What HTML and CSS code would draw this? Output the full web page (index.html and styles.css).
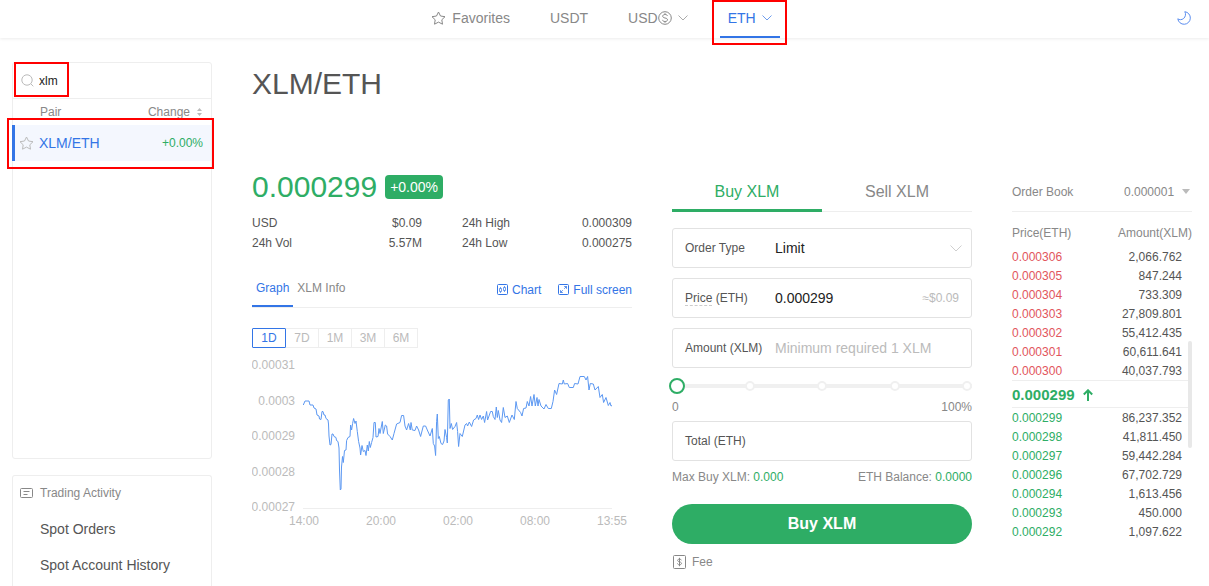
FILE: index.html
```html
<!DOCTYPE html>
<html lang="en">

<head>
    <meta charset="UTF-8">
    <meta name="viewport" content="width=device-width, initial-scale=1.0">
    <title>XLM/ETH</title>
    <link rel="stylesheet" href="styles.css">
</head>

<body>

    <header class="topbar">
        <nav class="markets">
            <a href="#" class="market">
                <svg class="star" width="15" height="14" viewBox="0 0 15 14"><path d="M7.5 1l2 4 4.5.7-3.2 3.1.7 4.4-4-2.1-4 2.1.7-4.4L1 5.7 5.500 5z"/></svg>
                Favorites
            </a>
            <a href="#" class="market">USDT</a>
            <a href="#" class="market">
                <span class="usds">USD<svg width="14" height="14" viewBox="0 0 14 14"><circle cx="7" cy="7" r="6.300"/><path d="M9.500 5C9.200 3.900 8.200 3.500 7 3.500S4.700 4.100 4.700 5.200 5.700 6.700 7 7s2.500.6 2.500 1.800S8.300 10.500 7 10.500 4.700 10 4.500 8.900M7 2.200v1.300M7 10.500v1.300"/></svg></span>
                <svg class="chevron" width="10" height="6" viewBox="0 0 10 6"><path d="M.5.5L5 5 9.500.5"/></svg>
            </a>
            <a href="#" class="market active">
                ETH
                <svg class="chevron" width="10" height="6" viewBox="0 0 10 6"><path d="M.5.5L5 5 9.500.5"/></svg>
                <span class="mark mark-market"></span>
            </a>
        </nav>
        <button class="theme" aria-label="Dark mode">
            <svg width="14" height="14" viewBox="0 0 14 14"><path d="M7.800.7A6.300 6.300 0 1 1 .8 7.800C2.300 9 4.800 9 6.600 7.500 8.600 5.800 9.100 2.800 7.800.7z"/></svg>
        </button>
    </header>

    <div class="layout">

        <aside class="sidebar">
            <section class="card pairs">
                <div class="search">
                    <svg width="13" height="13" viewBox="0 0 13 13"><circle cx="6" cy="6" r="5.200"/><path d="M9.800 9.800l2.500 2.500"/></svg>
                    <input type="text" value="xlm" aria-label="Search pair">
                    <span class="mark mark-search"></span>
                </div>
                <div class="pairs-head">
                    <span>Pair</span>
                    <button>Change <svg width="5" height="8" viewBox="0 0 5 8"><path d="M2.500 0L5 3H0zM2.500 8L5 5H0z"/></svg></button>
                </div>
                <a href="#" class="pair">
                    <svg class="star" width="15" height="14" viewBox="0 0 15 14"><path d="M7.5 1l2 4 4.5.7-3.2 3.1.7 4.4-4-2.1-4 2.1.7-4.4L1 5.7 5.500 5z"/></svg>
                    <span class="pair-name">XLM/ETH</span>
                    <span class="pair-change">+0.00%</span>
                    <span class="mark mark-pair"></span>
                </a>
            </section>

            <section class="card activity">
                <h2>
                    <svg width="14" height="10" viewBox="0 0 14 10"><rect x=".5" y=".5" width="12" height="9" rx="1"/><path d="M3.500 3.500h6M3.500 6.500h4"/></svg>
                    Trading Activity
                </h2>
                <a href="#">Spot Orders</a>
                <a href="#">Spot Account History</a>
            </section>
        </aside>

        <main class="trade">
            <h1>XLM/ETH</h1>

            <div class="columns">

                <section class="overview">
                    <div class="price">
                        <span class="price-value">0.000299</span>
                        <span class="badge">+0.00%</span>
                    </div>
                    <dl class="stats">
                        <div><dt>USD</dt><dd>$0.09</dd></div>
                        <div><dt>24h High</dt><dd>0.000309</dd></div>
                        <div><dt>24h Vol</dt><dd>5.57M</dd></div>
                        <div><dt>24h Low</dt><dd>0.000275</dd></div>
                    </dl>

                    <div class="chart-bar">
                        <button class="chart-tab active">Graph</button>
                        <button class="chart-tab">XLM Info</button>
                        <div class="chart-links">
                            <a href="#">
                                <svg width="11" height="11" viewBox="0 0 11 11"><rect x=".5" y=".5" width="10" height="10" rx="1"/><path stroke-width=".7" d="M2.500 4.500h2v3h-2zM3.500 3v1.500M3.500 7.500V9M6.500 3.500h2v3h-2zM7.500 2v1.500M7.500 6.500V8"/></svg>
                                Chart
                            </a>
                            <a href="#">
                                <svg width="11" height="11" viewBox="0 0 11 11"><rect x=".5" y=".5" width="10" height="10" rx="1"/><path stroke-width=".8" d="M6.200 4.800l2.300-2.300M6.200 2.500h2.300v2.300M4.800 6.200L2.500 8.500M2.500 6.200v2.300h2.300"/></svg>
                                Full screen
                            </a>
                        </div>
                    </div>

                    <div class="ranges">
                        <button class="active">1D</button>
                        <button>7D</button>
                        <button>1M</button>
                        <button>3M</button>
                        <button>6M</button>
                    </div>

                    <svg class="chart" viewBox="0 0 380 175" role="img" aria-label="XLM/ETH price, last day">
                        <g class="axis-y">
                            <text x="43" y="14">0.00031</text>
                            <text x="43" y="50">0.0003</text>
                            <text x="43" y="85">0.00029</text>
                            <text x="43" y="121">0.00028</text>
                            <text x="43" y="156">0.00027</text>
                        </g>
                        <g class="axis-x">
                            <text x="52" y="170">14:00</text>
                            <text x="129" y="170">20:00</text>
                            <text x="206" y="170">02:00</text>
                            <text x="283" y="170">08:00</text>
                            <text x="360" y="170">13:55</text>
                        </g>
                        <path class="baseline" d="M51 153.500h309"/>
                        <polyline class="line" points="51.3,50 53,46 57,46 58,50 61,50 62,53 64,54 65,60 67,61 67.5,64 69,64.5 70,56.5 71,56.5 72,60 73,60 74,63.5 76,65 76.5,69 77,81 78,90 79,89.5 80,79 81,79 82,81.5 84,82.5 84.5,85.5 86,86.5 87,93 87.5,115 88.3,135 89,134 89.5,112 90.5,101.5 91.3,107.5 92.5,95.5 94,95 94.6,85.5 96,82.5 98,81.5 98.6,70 99.6,75 100.6,68.5 101.6,63.5 103,68.5 104,66 105.3,76.5 106.6,86.5 108,93 108.6,100 110,90.5 111.3,96.5 113,95.5 114,100.5 115.3,90 116.3,96 117.3,86.5 118.3,92.5 119.6,87.5 121,82.5 122,67.5 123.3,67.5 124,82 126,81.5 127,73.5 128,78.5 130.3,66.5 131.3,78.5 133.3,70 134.6,71 135.6,79 138,81.5 140.3,85 142,78.5 144.6,69 148,67.5 149.6,60.5 151.6,60.5 153,71 154.6,75 156.6,68.5 158.3,75 159,67.5 160.3,75 163,75.5 164.6,71 166.6,75 168.6,81.5 171.3,71 173.6,71 175.3,75 178,81 180.3,73.5 181.3,88.5 182.6,91 183.6,100.5 184.6,66.5 185.3,59 186.3,83.5 187.3,81.5 189,88.5 190.6,89.5 192,86 193,74.5 194.6,82.5 195.3,88 196.3,45 197.3,44 198,73.5 199.3,68.5 200.6,74.5 203,71.5 204.6,67.5 205.6,76.5 206.6,91.5 208,78.5 210.3,81.5 213,70 214.6,68.5 215.6,71 217.3,67 219.6,71.5 221.6,65 224,63.5 225.3,60 226.6,64.5 228,60 229.6,64.5 231.3,61 232.6,67.5 234.6,56.5 235.6,65 238.6,56.5 240.3,56.5 241.3,61.5 243,64.5 244.3,52 245.3,62.5 246.3,55.5 248,65 249.6,67.5 251.3,52.5 253,62.5 255.3,61 257.3,67.5 260,60 262.3,64.5 264,46.5 265.3,53.5 268.6,57.5 270,61 271.6,53.5 274,53 275.3,46.5 277,51 278.6,41.5 280,51 282,39.5 283.3,51 285,42.5 286,51 287,44.5 289,51 292,54 294,49.5 296.3,53.5 299.3,53.5 301,46.5 302.6,35 304.6,39.5 307,28.5 310.3,29 311.3,25 312.3,29 315.6,28.5 317.3,32.5 321.3,32.5 322.6,28.5 326,29 328,21.5 332.3,21.5 334,25 335.6,21.5 337,35 338.3,28.5 341.3,29 343,35 346.3,31.5 348,42.5 350.3,39.5 351.6,47.5 354,42.5 356.3,50.5 358,47.5 359,51 360,50.5"/>
                    </svg>
                </section>

                <form class="order">
                    <div class="order-tabs">
                        <button type="button" class="active">Buy XLM</button>
                        <button type="button">Sell XLM</button>
                    </div>

                    <div class="field">
                        <label for="order-type">Order Type</label>
                        <select id="order-type"><option>Limit</option></select>
                        <svg class="chevron" width="12" height="7" viewBox="0 0 12 7"><path d="M.5.5L6 6 11.500.5"/></svg>
                    </div>
                    <div class="field">
                        <label for="price"><span class="hint">Price</span> (ETH)</label>
                        <input type="text" id="price" value="0.000299">
                        <span class="fiat">≈$0.09</span>
                    </div>
                    <div class="field">
                        <label for="amount">Amount (XLM)</label>
                        <input type="text" id="amount" placeholder="Minimum required 1 XLM">
                    </div>

                    <div class="slider">
                        <span class="stop"></span>
                        <span class="stop"></span>
                        <span class="stop"></span>
                        <span class="stop"></span>
                        <span class="stop"></span>
                        <input type="range" min="0" max="100" value="0" aria-label="Share of balance">
                    </div>
                    <div class="slider-labels"><span>0</span><span>100%</span></div>

                    <div class="field">
                        <label for="total">Total (ETH)</label>
                        <input type="text" id="total">
                    </div>

                    <div class="balances">
                        <span>Max Buy XLM: <b>0.000</b></span>
                        <span>ETH Balance: <b>0.0000</b></span>
                    </div>
                    <button type="submit" class="submit">Buy XLM</button>
                    <a href="#" class="fee">
                        <svg width="15" height="15" viewBox="0 0 15 15"><rect x="1.500" y=".5" width="12" height="13" rx="1"/><path d="M9.400 5.300C9.200 4.500 8.500 4.100 7.500 4.100S5.600 4.600 5.600 5.400 6.500 6.700 7.500 6.900s2 .6 2 1.500-1 1.400-2 1.400-1.900-.5-2-1.300M7.500 2.800v8.400"/></svg>
                        Fee
                    </a>
                </form>

                <section class="book">
                    <div class="book-head">
                        <label for="step">Order Book</label>
                        <select id="step"><option>0.000001</option></select>
                        <svg width="8" height="5" viewBox="0 0 8 5"><path d="M0 0h8L4 5z"/></svg>
                    </div>
                    <div class="book-body">
                        <table>
                            <thead>
                                <tr><th>Price(ETH)</th><th>Amount(XLM)</th></tr>
                            </thead>
                            <tbody class="sells">
                                <tr><td>0.000306</td><td>2,066.762</td></tr>
                                <tr><td>0.000305</td><td>847.244</td></tr>
                                <tr><td>0.000304</td><td>733.309</td></tr>
                                <tr><td>0.000303</td><td>27,809.801</td></tr>
                                <tr><td>0.000302</td><td>55,412.435</td></tr>
                                <tr><td>0.000301</td><td>60,611.641</td></tr>
                                <tr><td>0.000300</td><td>40,037.793</td></tr>
                            </tbody>
                            <tbody class="last">
                                <tr>
                                    <td colspan="2">0.000299<svg width="10" height="12" viewBox="0 0 10 12"><path d="M5 12V1.500M.8 5.500L5 1.300l4.200 4.200"/></svg></td>
                                </tr>
                            </tbody>
                            <tbody class="buys">
                                <tr><td>0.000299</td><td>86,237.352</td></tr>
                                <tr><td>0.000298</td><td>41,811.450</td></tr>
                                <tr><td>0.000297</td><td>59,442.284</td></tr>
                                <tr><td>0.000296</td><td>67,702.729</td></tr>
                                <tr><td>0.000294</td><td>1,613.456</td></tr>
                                <tr><td>0.000293</td><td>450.000</td></tr>
                                <tr><td>0.000292</td><td>1,097.622</td></tr>
                            </tbody>
                        </table>
                        <span class="scroll-thumb"></span>
                    </div>
                </section>

            </div>
        </main>

    </div>

</body>

</html>
```

FILE: styles.css
```css
* {
    box-sizing: border-box;
}

body {
    margin: 0;
    min-height: 100vh;
    display: flex;
    flex-direction: column;
    font-family: "Liberation Sans", Arial, sans-serif;
    font-size: 12px;
    line-height: 20px;
    color: #555;
    background: #fff;
}

a {
    color: inherit;
    text-decoration: none;
}

button, input, select {
    margin: 0;
    padding: 0;
    border: none;
    border-radius: 0;
    outline: none;
    background: none;
    font: inherit;
    color: inherit;
}

button {
    cursor: pointer;
}

select {
    appearance: none;
}

svg {
    flex: none;
    fill: none;
    stroke: currentColor;
}

/* red call-out frames */
.mark {
    position: absolute;
    border: 2px solid #f00;
    pointer-events: none;
}

.mark-market {
    top: 0;
    right: -7px;
    bottom: -9px;
    left: -8px;
}

.mark-search {
    top: -1px;
    left: 1px;
    width: 55px;
    height: 35px;
}

.mark-pair {
    top: -7px;
    right: -3px;
    bottom: -8px;
    left: -8px;
}

/* top bar */
.topbar {
    display: grid;
    grid-template-columns: 1fr auto 1fr;
    height: 38px;
    padding: 0 18px 0 12px;
    box-shadow: 0 1px 3px rgba(0, 0, 0, 0.08);
}

.markets {
    grid-column: 2;
    display: flex;
    gap: 24px;
    font-size: 14px;
    color: #888;
}

.market {
    position: relative;
    display: flex;
    align-items: center;
    gap: 6px;
    padding: 0 8px;
    border-bottom: 2px solid transparent;
}

.market.active {
    color: #3375e6;
    border-color: #3375e6;
}

.usds {
    display: flex;
    align-items: center;
}

.chevron {
    opacity: 0.7;
}

.theme {
    justify-self: end;
    display: flex;
    align-items: center;
    padding-bottom: 3px;
    color: #5b8def;
}

/* page grid */
.layout {
    flex: 1;
    display: grid;
    grid-template-columns: 200px 1fr;
    gap: 40px;
    padding: 24px 17px 0 12px;
}

.sidebar {
    display: flex;
    flex-direction: column;
    gap: 16px;
}

.card {
    border: 1px solid #eee;
    border-radius: 3px;
}

.pairs {
    min-height: 397px;
}

.search {
    position: relative;
    display: flex;
    align-items: center;
    gap: 5px;
    height: 36px;
    padding: 0 8px;
    border-bottom: 1px solid #eee;
    color: #bbb;
}

.search input {
    flex: 1;
    min-width: 0;
    color: #222;
}

.pairs-head {
    display: flex;
    justify-content: space-between;
    height: 26px;
    padding: 3px 9px 3px 27px;
    color: #888;
}

.pairs-head button {
    display: flex;
    align-items: center;
    gap: 7px;
}

.pairs-head svg {
    fill: #bbb;
    stroke: none;
}

.pair {
    position: relative;
    display: flex;
    align-items: center;
    gap: 5px;
    height: 36px;
    margin-left: -1px;
    padding: 0 8px 0 4px;
    border-left: 3px solid #3375e6;
    background: #f4f7fe;
}

.pair .star {
    color: #bbb;
}

.pair-name {
    flex: 1;
    font-size: 14px;
    color: #3375e6;
}

.pair-change {
    color: #2ead65;
}

.activity {
    flex: 1;
    padding: 7px;
    border-bottom: none;
    border-radius: 3px 3px 0 0;
}

.activity h2 {
    display: flex;
    align-items: center;
    gap: 6px;
    margin: 0 0 8px;
    font-size: 12px;
    font-weight: normal;
    color: #888;
}

.activity a {
    display: block;
    padding-left: 20px;
    font-size: 14px;
    line-height: 36px;
}

.trade h1 {
    margin: 4px 0 67px;
    font-size: 30px;
    font-weight: normal;
    line-height: 36px;
}

.columns {
    display: grid;
    grid-template-columns: 1fr 300px 180px;
    gap: 40px;
}

/* price and graph */
.price {
    display: flex;
    align-items: center;
    gap: 8px;
    margin-bottom: 8px;
    color: #2ead65;
}

.price-value {
    font-size: 30px;
    line-height: 36px;
}

.badge {
    padding: 2px 5px;
    border-radius: 4px;
    background: #2ead65;
    font-size: 14px;
    color: #fff;
}

.stats {
    display: grid;
    grid-template-columns: 1fr 1fr;
    column-gap: 40px;
    margin: 0;
}

.stats div {
    display: flex;
    justify-content: space-between;
}

.stats dd {
    margin: 0;
}

.chart-bar {
    display: flex;
    height: 36px;
    margin-top: 19px;
    border-bottom: 1px solid #eee;
}

.chart-tab {
    padding: 0 4px 2px;
    border-bottom: 2px solid transparent;
    color: #888;
}

.chart-tab.active {
    color: #3375e6;
    border-color: #3375e6;
}

.chart-links {
    display: flex;
    align-items: center;
    gap: 17px;
    margin-left: auto;
    color: #3375e6;
}

.chart-links a {
    display: flex;
    align-items: center;
    gap: 4px;
}

.ranges {
    display: flex;
    margin-top: 20px;
}

.ranges button {
    width: 34px;
    height: 20px;
    border: 1px solid #eee;
    line-height: 18px;
    color: #bbb;
}

.ranges button + button {
    margin-left: -1px;
}

.ranges .active {
    position: relative;
    border-color: #3375e6;
    border-radius: 1px;
    color: #3375e6;
}

.chart {
    display: block;
    width: 100%;
    margin-top: 7px;
}

.chart text {
    fill: #bbb;
    stroke: none;
}

.axis-y {
    text-anchor: end;
}

.axis-x {
    text-anchor: middle;
}

.baseline {
    stroke: #eee;
}

.line {
    stroke: #5c98f2;
}

/* order form */
.order-tabs {
    display: flex;
    height: 43px;
    margin-bottom: 16px;
    box-shadow: inset 0 -1px #eee;
}

.order-tabs button {
    flex: 1;
    padding-top: 6px;
    border-bottom: 3px solid transparent;
    font-size: 16px;
    color: #888;
}

.order-tabs .active {
    color: #2ead65;
    border-color: #2ead65;
}

.field {
    display: flex;
    align-items: center;
    height: 40px;
    padding: 0 12px;
    border: 1px solid #e2e2e2;
    border-radius: 3px;
}

.field + .field {
    margin-top: 10px;
}

.field label {
    width: 90px;
}

.field input, .field select {
    flex: 1;
    min-width: 0;
    font-size: 14px;
    color: #222;
}

.field input::placeholder {
    color: #bbb;
}

.field .chevron {
    margin-right: -3px;
    color: #bbb;
}

.hint {
    border-bottom: 1px dashed #ccc;
}

.fiat {
    color: #bbb;
}

.slider {
    position: relative;
    display: flex;
    align-items: center;
    justify-content: space-between;
    height: 16px;
    margin: 10px 0 3px;
    background: linear-gradient(#f0f0f0, #f0f0f0) center / 100% 4px no-repeat;
}

.stop {
    width: 10px;
    height: 10px;
    border: 2px solid #f0f0f0;
    border-radius: 50%;
    background: #fff;
}

.slider input {
    position: absolute;
    top: 0;
    left: -3px;
    width: calc(100% + 6px);
    height: 16px;
    appearance: none;
}

.slider input::-webkit-slider-thumb {
    appearance: none;
    width: 16px;
    height: 16px;
    border: 2px solid #2ead65;
    border-radius: 50%;
    background: #fff;
}

.slider-labels, .balances {
    display: flex;
    justify-content: space-between;
    color: #888;
}

.slider-labels {
    margin-bottom: 4px;
}

.balances {
    margin: 6px 0 17px;
}

.balances b {
    font-weight: normal;
    color: #2ead65;
}

.submit {
    display: block;
    width: 100%;
    height: 40px;
    margin-bottom: 8px;
    border-radius: 20px;
    background: #2ead65;
    font-size: 16px;
    font-weight: bold;
    color: #fff;
}

.fee {
    display: flex;
    align-items: center;
    gap: 5px;
    color: #888;
}

/* order book */
.book-head {
    display: flex;
    align-items: center;
    gap: 7px;
    height: 43px;
    padding: 3px 2px 0 0;
    border-bottom: 1px solid #eee;
    color: #888;
}

.book-head label {
    flex: 1;
}

.book-head svg {
    fill: #bbb;
    stroke: none;
}

.book-body {
    position: relative;
}

.book table {
    width: 100%;
    border-spacing: 0;
}

.book th, .book td {
    padding: 1px 0 0;
    text-align: left;
    line-height: 18px;
}

.book th {
    padding-top: 7px;
    font-weight: normal;
    line-height: 28px;
    color: #888;
}

.book th + th, .book td + td {
    text-align: right;
}

.book td + td {
    padding-right: 10px;
}

.sells td:first-child {
    color: #e2555c;
}

.buys td:first-child {
    color: #2ead65;
}

.book .last td {
    padding-top: 2px;
    border: 1px solid #eee;
    border-width: 1px 0;
    font-size: 15px;
    font-weight: bold;
    line-height: 24px;
    color: #2ead65;
}

.last svg {
    margin-left: 8px;
    stroke-width: 2;
    vertical-align: -1px;
}

.scroll-thumb {
    position: absolute;
    top: 129px;
    right: 0;
    width: 4px;
    height: 107px;
    border-radius: 2px;
    background: #e8e8e8;
}
```
